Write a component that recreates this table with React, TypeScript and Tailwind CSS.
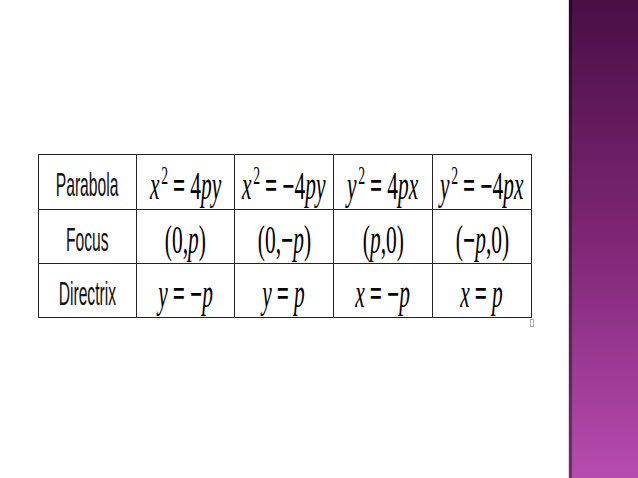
const serif = "font-['Liberation_Serif',serif]";
const sans = "font-['Liberation_Sans',sans-serif]";

function V({ children }: { children: React.ReactNode }) {
  return <span className="italic">{children}</span>;
}

function Sup({ children }: { children: React.ReactNode }) {
  return <span className="relative -top-[15px] text-[25px] not-italic ml-[3px]">{children}</span>;
}

function Eq() {
  return <span className="font-bold mx-[9px]">=</span>;
}

const M = <span className="font-bold">{'\u2212'}</span>;

const rows: React.ReactNode[][] = [
  [
    'Parabola',
    <><V>x</V><Sup>2</Sup><Eq />4<V>py</V></>,
    <><V>x</V><Sup>2</Sup><Eq />{M}4<V>py</V></>,
    <><V>y</V><Sup>2</Sup><Eq />4<V>px</V></>,
    <><V>y</V><Sup>2</Sup><Eq />{M}4<V>px</V></>,
  ],
  [
    'Focus',
    <>(0,<V>p</V>)</>,
    <>(0,{M}<V>p</V>)</>,
    <>(<V>p</V>,0)</>,
    <>({M}<V>p</V>,0)</>,
  ],
  [
    'Directrix',
    <><V>y</V><Eq />{M}<V>p</V></>,
    <><V>y</V><Eq /><V>p</V></>,
    <><V>x</V><Eq />{M}<V>p</V></>,
    <><V>x</V><Eq /><V>p</V></>,
  ],
];

const colW = ['w-[97px]', 'w-[98px]', 'w-[99px]', 'w-[99px]', 'w-[99px]'];

export default function App() {
  return (
    <div className="w-[638px] h-[478px] flex bg-white overflow-hidden">
      {/* Slide body */}
      <div className="flex-1 pl-[38px] pt-[154px]">
        <div className="relative w-[494px]">
          <div className="flex flex-col border border-[#222] w-[494px]">
            {rows.map((r, ri) => (
              <div key={ri} className={`flex h-[54px] ${ri > 0 ? 'border-t border-[#222]' : ''}`}>
                {r.map((cell, ci) => (
                  <div
                    key={ci}
                    className={`${colW[ci]} shrink-0 flex items-center justify-center whitespace-nowrap text-black ${ci > 0 ? 'border-l border-[#222]' : ''}`}
                  >
                    {ci === 0 ? (
                      <span className={`${sans} inline-block text-[34px] leading-none scale-x-[0.46] pt-[4px] text-[#111]`}>{cell}</span>
                    ) : (
                      <span className={`${serif} inline-block text-[39px] leading-none scale-x-[0.55] pt-[6px]`}>{cell}</span>
                    )}
                  </div>
                ))}
              </div>
            ))}
          </div>
          <span className="absolute left-[492px] top-[165px] w-[4px] h-[8px] border border-[#aaa]" />
        </div>
      </div>
      {/* Purple side band */}
      <div className="w-[70px] h-full flex border-l border-[#ead0e6]">
        <div className="w-[3px] h-full bg-gradient-to-b from-[#2e0529] to-[#7a2672]" />
        <div className="flex-1 h-full bg-gradient-to-b from-[#4a0f45] via-[#7e2676] to-[#b84bb0]" />
      </div>
    </div>
  );
}
